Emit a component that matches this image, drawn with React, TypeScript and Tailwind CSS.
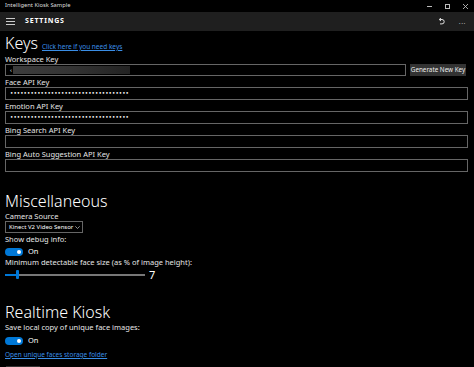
import React from "react";

const dots = "•".repeat(35);

function Label({ children, h = "h-[11px]" }: { children: React.ReactNode; h?: string }) {
  return <div className={`${h} flex items-end text-[7.5px] leading-[9px] text-[#e6e6e6] whitespace-nowrap`}>{children}</div>;
}

function Field({ label, value }: { label: string; value?: string }) {
  return (
    <div>
      <Label>{label}</Label>
      <div className="w-[463px] h-[13px] border-[1.5px] border-[#666] flex items-center px-[4px]">
        {value && (
          <span className="text-[5.6px] leading-none text-white tracking-[0.1px]" style={{ fontFamily: "'DejaVu Sans', sans-serif" }}>
            {value}
          </span>
        )}
      </div>
    </div>
  );
}

function Toggle() {
  return (
    <div className="h-[8px] flex items-center gap-[5px]">
      <div className="w-[18px] h-[8px] rounded-full bg-[#0078d7] flex items-center justify-end pr-[2px]">
        <div className="w-[4px] h-[4px] rounded-full bg-white" />
      </div>
      <span className="text-[7.5px] leading-none text-white">On</span>
    </div>
  );
}

function Heading({ children }: { children: React.ReactNode }) {
  return <div className="text-[16px] leading-[20px] font-light text-white whitespace-nowrap">{children}</div>;
}

export default function App() {
  return (
    <div
      className="w-[474px] h-[367px] bg-black text-white overflow-hidden"
      style={{ fontFamily: "'Noto Sans', 'Open Sans', sans-serif" }}
    >
      {/* window title bar */}
      <div className="h-[12px] flex items-center justify-between pl-[5px] pr-[6px]">
        <span className="text-[5.8px] leading-none text-[#ddd]">Intelligent Kiosk Sample</span>
        <div className="flex items-center gap-[13px] text-[#bbb]">
          <div className="w-[5px] h-[1px] bg-[#bbb]" />
          <div className="w-[5px] h-[5px] border border-[#bbb]" />
          <svg width="5" height="5" viewBox="0 0 5 5" stroke="#bbb" strokeWidth="0.9">
            <path d="M0 0L5 5M5 0L0 5" />
          </svg>
        </div>
      </div>

      {/* header */}
      <div className="h-[19px] bg-[#1f1f1f] flex items-center pl-[6px] pr-[8px]">
        <svg width="9" height="7" viewBox="0 0 9 7" stroke="#ccc" strokeWidth="1">
          <path d="M0 0.5H9M0 3.5H9M0 6.5H9" />
        </svg>
        <span className="ml-[10px] text-[7px] font-bold tracking-[0.8px] text-white">SETTINGS</span>
        <div className="ml-auto flex items-center gap-[14px]">
          <svg width="7" height="8" viewBox="0 0 7 8" fill="none" stroke="#ddd" strokeWidth="1">
            <path d="M1.5 1.5H4a2.2 2.2 0 0 1 0 4.4H2" />
            <path d="M3 0L1.2 1.5L3 3" />
          </svg>
          <span className="text-[7px] leading-none text-[#aaa] tracking-[0.5px]">...</span>
        </div>
      </div>

      <div className="px-[5px]">
        {/* Keys */}
        <div className="mt-[2px] flex items-end gap-[4px]">
          <Heading>Keys</Heading>
          <span className="text-[6.5px] leading-[10px] mb-[1px] text-[#3a8ee6] underline whitespace-nowrap">Click here if you need keys</span>
        </div>

        <div>
          <Label>Workspace Key</Label>
          <div className="flex items-center gap-[4px]">
            <div className="w-[401px] h-[12px] border-[1.5px] border-[#666] flex items-center pl-[4px]">
              <span className="text-[6px] leading-none text-white">‹</span>
              <div className="ml-[1px] w-[117px] h-[8px] bg-gradient-to-r from-[#3c3c3c] via-[#333] to-[#222]" />
            </div>
            <button className="w-[56px] h-[12px] bg-[#333] text-[6.3px] leading-none text-[#eee] whitespace-nowrap">Generate New Key</button>
          </div>
        </div>

        <Field label="Face API Key" value={dots} />
        <Field label="Emotion API Key" value={dots} />
        <Field label="Bing Search API Key" />
        <Field label="Bing Auto Suggestion API Key" />

        {/* Miscellaneous */}
        <div className="mt-[19px]">
          <Heading>Miscellaneous</Heading>
        </div>
        <Label h="h-[10px]">Camera Source</Label>
        <div className="w-[78px] h-[12px] border-[1.5px] border-[#666] flex items-center justify-between pl-[3px] pr-[2px]">
          <span className="text-[6px] leading-none text-white whitespace-nowrap">Kinect V2 Video Sensor</span>
          <svg width="5" height="3" viewBox="0 0 5 3" fill="none" stroke="#ccc" strokeWidth="0.7" className="shrink-0">
            <path d="M0.3 0.3L2.5 2.5L4.7 0.3" />
          </svg>
        </div>
        <Label>Show debug info:</Label>
        <div className="mt-[4px]">
          <Toggle />
        </div>
        <Label>Minimum detectable face size (as % of image height):</Label>
        <div className="mt-[2px] flex items-center">
          <div className="w-[140px] h-[10px] flex items-center">
            <div className="w-[11px] h-[2px] bg-[#0078d7]" />
            <div className="w-[3px] h-[9px] rounded-[1px] bg-[#0078d7]" />
            <div className="flex-1 h-[2px] bg-[#777]" />
          </div>
          <span className="ml-[4px] text-[11px] leading-none text-white">7</span>
        </div>

        {/* Realtime Kiosk */}
        <div className="mt-[22px]">
          <Heading>Realtime Kiosk</Heading>
        </div>
        <Label h="h-[10px]">Save local copy of unique face images:</Label>
        <div className="mt-[5px]">
          <Toggle />
        </div>
        <div className="mt-[5px] text-[6.5px] leading-[9px] text-[#3a8ee6] underline whitespace-nowrap">Open unique faces storage folder</div>
        <div className="mt-[7px] ml-[1px] w-[34px] h-[12px] bg-[#333]" />
      </div>
    </div>
  );
}
